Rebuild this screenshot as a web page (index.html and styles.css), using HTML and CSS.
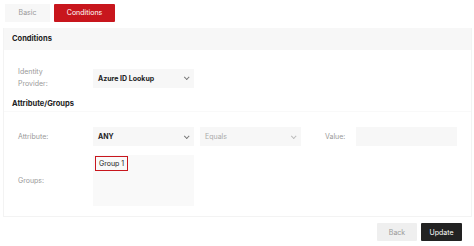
FILE: index.html
```html
<!DOCTYPE html>
<html lang="en">
<head>
    <meta charset="UTF-8">
    <title>Conditions</title>
    <link rel="stylesheet" href="styles.css">
</head>
<body>
    <div class="page">
        <nav class="tabs">
            <div class="tab">Basic</div>
            <div class="tab active">Conditions</div>
        </nav>

        <div class="card">
            <div class="card-head">Conditions</div>
            <div class="row provider-row">
                <label class="label">Identity<br>Provider:</label>
                <div class="select strong">Azure ID Lookup <span class="chev"></span></div>
            </div>

            <div class="section-head">Attribute/Groups</div>
            <div class="row attr-row">
                <label class="label">Attribute:</label>
                <div class="select strong">ANY <span class="chev"></span></div>
                <div class="select muted">Equals <span class="chev"></span></div>
                <label class="label value-label">Value:</label>
                <div class="input"></div>
            </div>
            <div class="row groups-row">
                <label class="label">Groups:</label>
                <div class="groups">
                    <span class="tag">Group 1</span>
                </div>
            </div>
        </div>

        <div class="actions">
            <button class="btn btn-back">Back</button>
            <button class="btn btn-update">Update</button>
        </div>
    </div>
</body>
</html>
```

FILE: styles.css
```css
:root {
    --red: #c8161d;
    --field: #f7f7f7;
    --text: #222;
    --text-light: #999;
}

* {
    margin: 0;
    padding: 0;
    box-sizing: border-box;
    font-family: 'Inter', 'Roboto', sans-serif;
}

body {
    background: #fff;
    color: var(--text);
    font-size: 7px;
}

.page {
    width: 474px;
    height: 246px;
}

.tabs {
    display: flex;
    gap: 4px;
    padding: 4px 0 0 5px;
}

.tab {
    height: 18px;
    line-height: 18px;
    text-align: center;
    background: #f7f7f7;
    color: var(--text-light);
    width: 45px;
}

.tab.active {
    background: var(--red);
    color: #fff;
    width: 61px;
    border-radius: 1px;
}

.card {
    margin: 6px 2px 0 3px;
    height: 189px;
    border: 1px solid #f3f3f3;
    border-top: none;
}

.card-head {
    height: 22px;
    line-height: 22px;
    background: #f7f7f7;
    padding-left: 8px;
    font-weight: 700;
    font-size: 7.5px;
}

.section-head {
    height: 16px;
    line-height: 16px;
    padding-left: 8px;
    font-weight: 700;
    font-size: 7.5px;
    margin-top: 6px;
    border-bottom: 1px solid #f9f9f9;
}

.row {
    display: flex;
    align-items: center;
    padding-left: 14px;
}

.label {
    width: 75px;
    color: var(--text-light);
    line-height: 12px;
}

.provider-row {
    margin-top: 16px;
}

.attr-row {
    margin-top: 15px;
}

.select {
    width: 101px;
    height: 19px;
    background: var(--field);
    display: flex;
    align-items: center;
    justify-content: space-between;
    padding: 0 6px 0 5px;
}

.select.strong {
    font-weight: 700;
}

.select.muted {
    color: #aaa;
    margin-left: 6px;
}

.chev {
    width: 4px;
    height: 4px;
    border-right: 1px solid #777;
    border-bottom: 1px solid #777;
    transform: rotate(45deg) translateY(-1px);
}

.muted .chev {
    border-color: #bbb;
}

.value-label {
    width: auto;
    margin-left: 24px;
    margin-right: 11px;
}

.input {
    width: 101px;
    height: 19px;
    background: var(--field);
}

.groups-row {
    margin-top: 9px;
}

.groups {
    width: 101px;
    height: 51px;
    background: #f9f9f9;
    padding: 1px 2px;
}

.tag {
    display: inline-block;
    border: 1.5px solid var(--red);
    padding: 1px 3px;
    line-height: 11px;
    color: var(--text);
}

.actions {
    display: flex;
    justify-content: flex-end;
    gap: 4px;
    padding: 6px 12px 0 0;
}

.btn {
    height: 18px;
    border: none;
    font-size: 7px;
    border-radius: 1px;
}

.btn-back {
    width: 40px;
    background: #efefef;
    color: #999;
}

.btn-update {
    width: 41px;
    background: #222;
    color: #fff;
}
```
